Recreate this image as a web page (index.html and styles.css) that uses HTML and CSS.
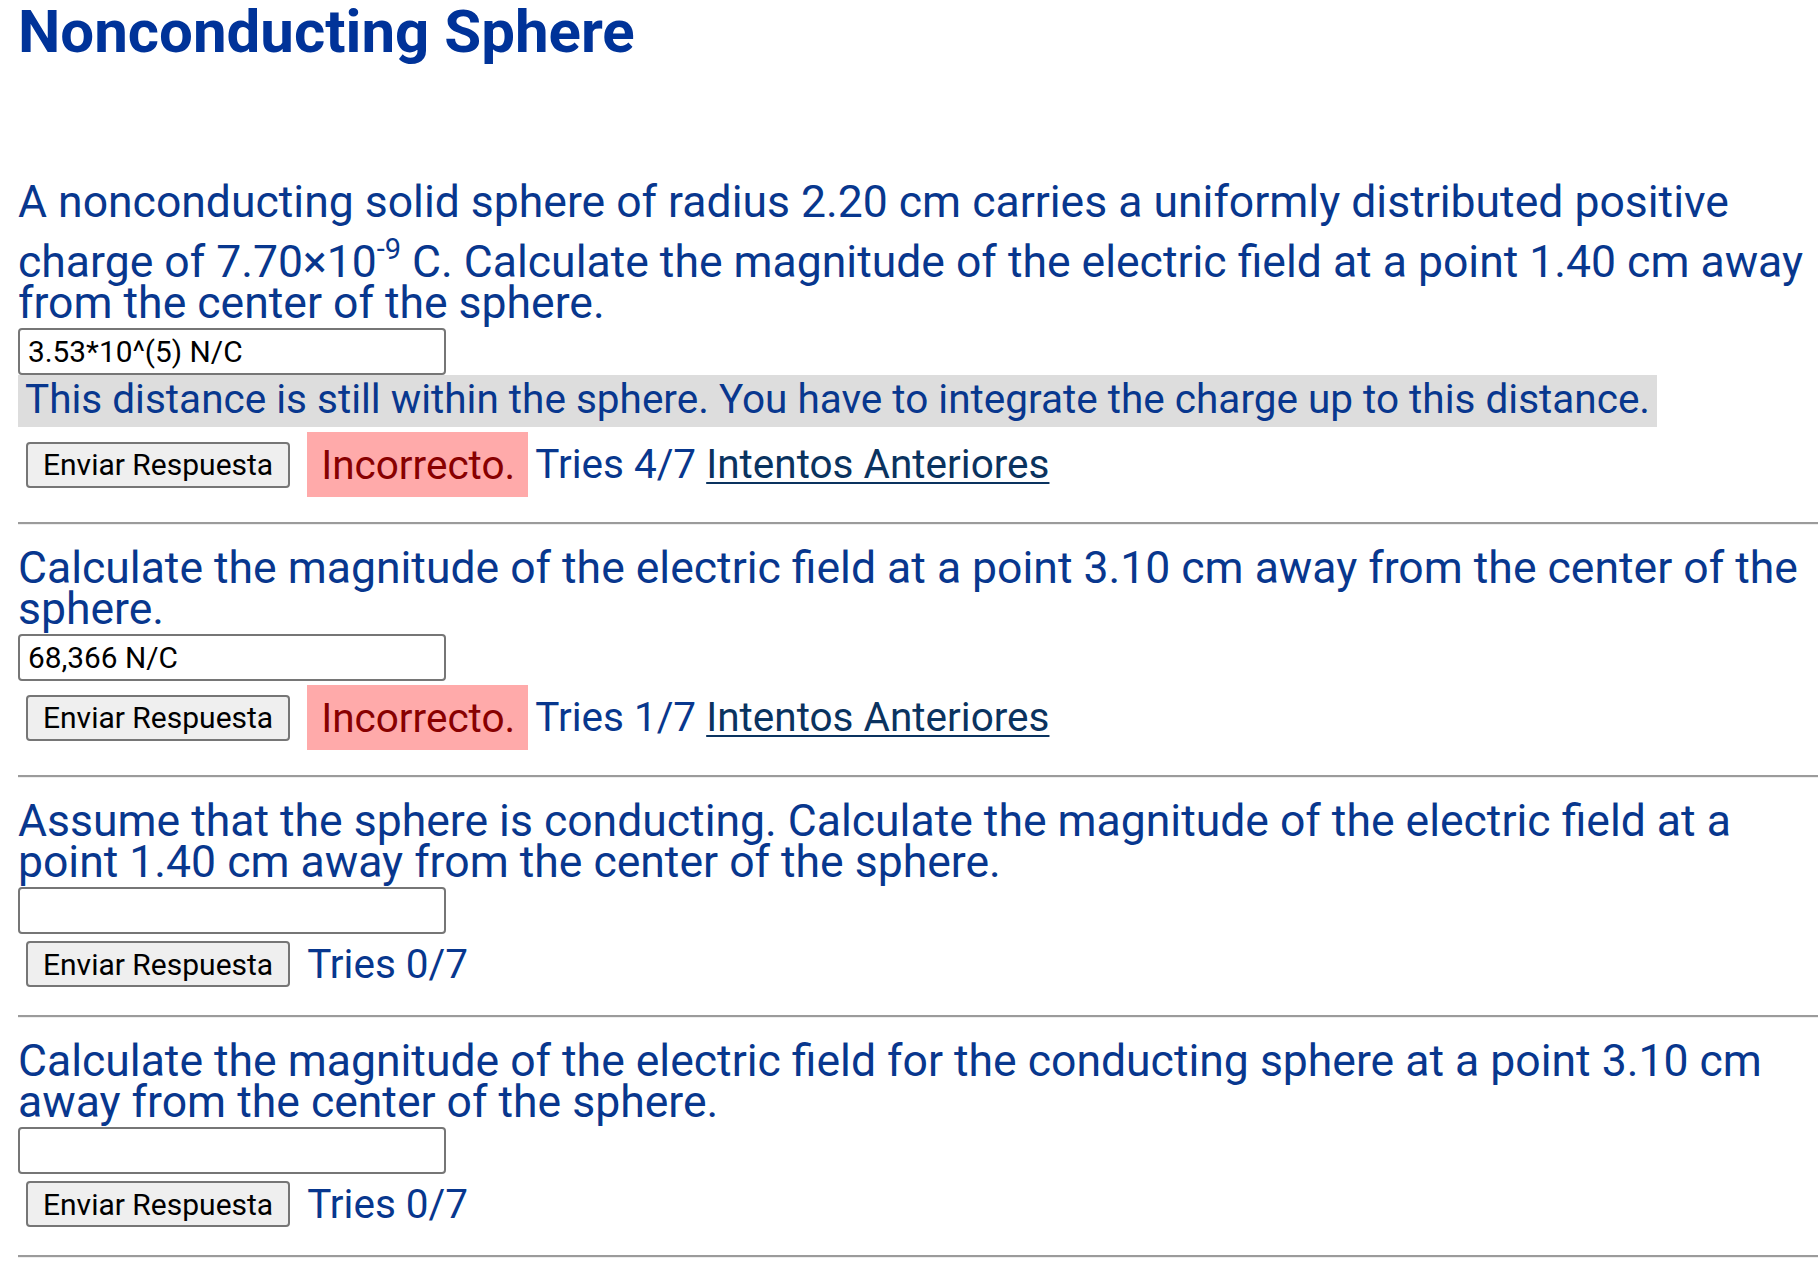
FILE: index.html
```html
<!DOCTYPE html>
<html lang="en">
<head>
<meta charset="utf-8">
<title>Nonconducting Sphere</title>
<link rel="stylesheet" href="styles.css">
</head>
<body>
<h1 class="title">Nonconducting Sphere</h1>

<section class="q q-first">
  <p class="prompt">A nonconducting solid sphere of radius 2.20 cm carries a uniformly distributed positive charge of 7.70×10<sup class="exp">-9</sup> C. Calculate the magnitude of the electric field at a point 1.40 cm away from the center of the sphere.</p>
  <input class="answer" type="text" value="3.53*10^(5) N/C">
  <div class="hint">This distance is still within the sphere. You have to integrate the charge up to this distance.</div>
  <div class="row">
    <button class="submit" type="button">Enviar Respuesta</button>
    <span class="bad">Incorrecto.</span>
    <span class="tries">Tries 4/7 <a class="prev" href="#">Intentos Anteriores</a></span>
  </div>
</section>
<hr class="sep">

<section class="q">
  <p class="prompt">Calculate the magnitude of the electric field at a point 3.10 cm away from the center of the sphere.</p>
  <input class="answer" type="text" value="68,366 N/C">
  <div class="row">
    <button class="submit" type="button">Enviar Respuesta</button>
    <span class="bad">Incorrecto.</span>
    <span class="tries">Tries 1/7 <a class="prev" href="#">Intentos Anteriores</a></span>
  </div>
</section>
<hr class="sep">

<section class="q">
  <p class="prompt">Assume that the sphere is conducting. Calculate the magnitude of the electric field at a point 1.40 cm away from the center of the sphere.</p>
  <input class="answer" type="text" value="">
  <div class="row">
    <button class="submit" type="button">Enviar Respuesta</button>
    <span class="tries">Tries 0/7</span>
  </div>
</section>
<hr class="sep">

<section class="q">
  <p class="prompt">Calculate the magnitude of the electric field for the conducting sphere at a point 3.10 cm away from the center of the sphere.</p>
  <input class="answer" type="text" value="">
  <div class="row">
    <button class="submit" type="button">Enviar Respuesta</button>
    <span class="tries">Tries 0/7</span>
  </div>
</section>
<hr class="sep">
</body>
</html>
```

FILE: styles.css
```css
html, body {
  background: #ffffff;
}

body {
  margin: 0 0 0 18px;
  font-family: Roboto, "Noto Sans", "Liberation Sans", sans-serif;
  color: #08378e;
  overflow: hidden;
}

.title {
  margin: 0;
  font-size: 60px;
  line-height: 63px;
  font-weight: 700;
  color: #003399;
}

.q {
  display: block;
}

.prompt {
  margin: 23px 0 0 0;
  font-size: 44.5px;
  line-height: 41px;
}

.q-first .prompt {
  margin-top: 119px;
}

.exp {
  font-size: 29px;
  line-height: 52px;
  vertical-align: 18px;
}

.answer {
  display: block;
  box-sizing: border-box;
  margin: 4px 0 0 0;
  width: 428px;
  height: 47px;
  padding: 0 8px;
  border: 2px solid #767676;
  border-radius: 4px;
  background: #ffffff;
  font-family: Roboto, "Noto Sans", "Liberation Sans", sans-serif;
  font-size: 29.8px;
  color: #000000;
}

.hint {
  display: inline-block;
  vertical-align: top;
  background: #dddddd;
  font-size: 40.5px;
  line-height: 48px;
  padding: 0 7px 4px 7px;
}

.row {
  display: flex;
  align-items: center;
  min-height: 52px;
  margin-top: 4px;
}

.q-first .row {
  margin-top: 5px;
}

.submit {
  box-sizing: border-box;
  height: 46px;
  margin: 0 17px 0 8px;
  padding: 0 15px;
  border: 2px solid #767676;
  border-radius: 4px;
  background: #efefef;
  font-family: Roboto, "Noto Sans", "Liberation Sans", sans-serif;
  font-size: 30px;
  color: #000000;
}

.bad {
  display: inline-block;
  background: #ffaaaa;
  color: #880000;
  font-size: 40.5px;
  line-height: 49px;
  padding: 9px 13px 7px 14px;
  margin-right: 7px;
}

.tries {
  font-size: 40.5px;
  line-height: 49px;
  white-space: nowrap;
}

.prev {
  color: #0a335f;
  text-decoration: underline;
  text-decoration-thickness: 2px;
  text-underline-offset: 4px;
}

.sep {
  margin: 25px 0 0 0;
  height: 0;
  border: 0;
  border-top: 2px solid #9b9b9b;
  border-bottom: 1px solid #eeeeee;
}
```
